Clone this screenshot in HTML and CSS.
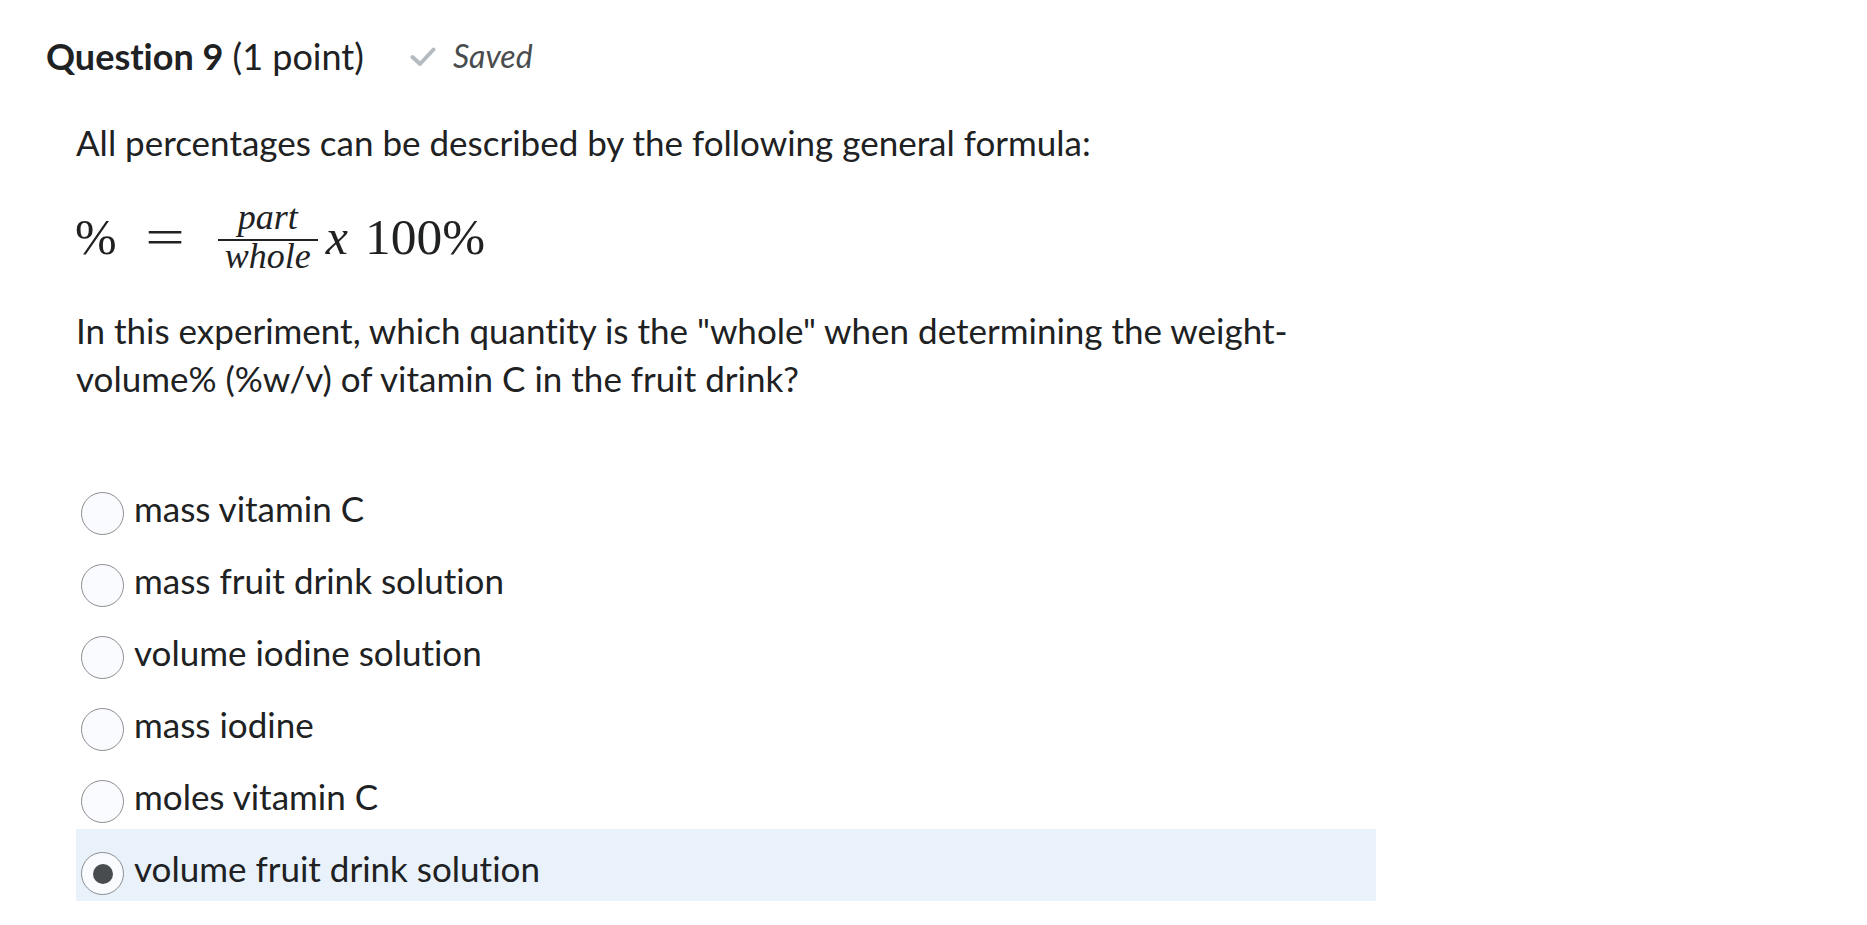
FILE: index.html
```html
<!DOCTYPE html>
<html lang="en">
<head>
    <meta charset="UTF-8">
    <meta name="viewport" content="width=device-width, initial-scale=1.0">
    <title>Question 9</title>
    <link rel="stylesheet" href="styles.css">
</head>
<body>
    <div class="question-header">
        <h2 class="question-title"><strong>Question 9</strong> (1 point)</h2>
        <div class="saved">
            <svg class="saved-icon" width="26" height="20" viewBox="0 0 26 20">
                <polyline points="2.5,10 10,17 23.5,2.5" fill="none" stroke="#b6bbbf" stroke-width="4" stroke-linecap="round" stroke-linejoin="round"/>
            </svg>
            <span>Saved</span>
        </div>
    </div>

    <div class="question-body">
        <p class="text first">All percentages can be described by the following general formula:</p>

        <div class="formula"><span class="sym percent">%</span><span class="sym equals">=</span><span class="frac"><span class="num">part</span><span class="den">whole</span></span><span class="sym var">x</span><span class="sym hundred">100%</span></div>

        <p class="text prompt">In this experiment, which quantity is the "whole" when determining the weight-volume% (%w/v) of vitamin C in the fruit drink?</p>

        <div class="options">
            <label class="option">
                <span class="radio"></span>
                <span class="option-text">mass vitamin C</span>
            </label>
            <label class="option">
                <span class="radio"></span>
                <span class="option-text">mass fruit drink solution</span>
            </label>
            <label class="option">
                <span class="radio"></span>
                <span class="option-text">volume iodine solution</span>
            </label>
            <label class="option">
                <span class="radio"></span>
                <span class="option-text">mass iodine</span>
            </label>
            <label class="option">
                <span class="radio"></span>
                <span class="option-text">moles vitamin C</span>
            </label>
            <label class="option selected">
                <span class="radio checked"></span>
                <span class="option-text">volume fruit drink solution</span>
            </label>
        </div>
    </div>
</body>
</html>
```

FILE: styles.css
```css
body {
    margin: 0;
    padding: 0 0 0 46px;
    font-family: Lato, "Open Sans", sans-serif;
    font-variant-ligatures: none;
    color: #202122;
    background: #fff;
}
.question-header {
    display: flex;
    align-items: center;
    margin-top: 34px;
    height: 44px;
}
.question-title {
    margin: 0;
    font-size: 36px;
    line-height: 44px;
    font-weight: 400;
}
.question-title strong {
    font-weight: 700;
}
.saved {
    display: flex;
    align-items: center;
    margin-left: 46px;
    margin-bottom: 1px;
    color: #494c4e;
    font-size: 32px;
    line-height: 34px;
    font-style: italic;
}
.saved-icon {
    margin-right: 17px;
    margin-top: 2px;
}
.question-body {
    margin-left: 30px;
    width: 1300px;
}
.text {
    margin: 0;
    font-size: 35px;
    line-height: 51px;
}
.text.first {
    margin-top: 39px;
}
.formula {
    margin-top: 31px;
    font-family: "Liberation Serif", "Times New Roman", serif;
    font-size: 50px;
    line-height: 60px;
    white-space: nowrap;
}
.sym {
    display: inline-block;
}
.percent {
    margin-left: -1px;
}
.equals {
    margin-left: 34px;
    transform: scaleX(1.4);
}
.frac {
    display: inline-flex;
    flex-direction: column;
    align-items: center;
    vertical-align: 25px;
    margin-left: 39px;
    font-style: italic;
    font-size: 36px;
}
.num {
    align-self: stretch;
    padding: 0 7px 4px;
    line-height: 36px;
    text-align: center;
    border-bottom: 2px solid #202122;
}
.den {
    padding: 0 7px;
    line-height: 30px;
}
.var {
    font-style: italic;
    margin-left: 8px;
}
.hundred {
    margin-left: 17px;
    font-size: 51.5px;
}
.text.prompt {
    margin-top: 34.5px;
    line-height: 48px;
}
.options {
    margin-top: 67.5px;
}
.option {
    display: flex;
    align-items: flex-start;
    height: 72px;
    padding-left: 5px;
    font-size: 35px;
}
.option.selected {
    background: #e9f1fa;
}
.radio {
    position: relative;
    flex: none;
    width: 43px;
    height: 43px;
    margin-top: 23px;
    box-sizing: border-box;
    border: 1.5px solid #8b8d8f;
    border-radius: 50%;
    background: #f9fbff;
}
.radio.checked::after {
    content: "";
    position: absolute;
    left: 50%;
    top: 50%;
    width: 20px;
    height: 20px;
    margin: -10px 0 0 -10px;
    border-radius: 50%;
    background: #494c4e;
}
.option-text {
    margin-top: 18.5px;
    margin-left: 10px;
    line-height: 40px;
}
```
